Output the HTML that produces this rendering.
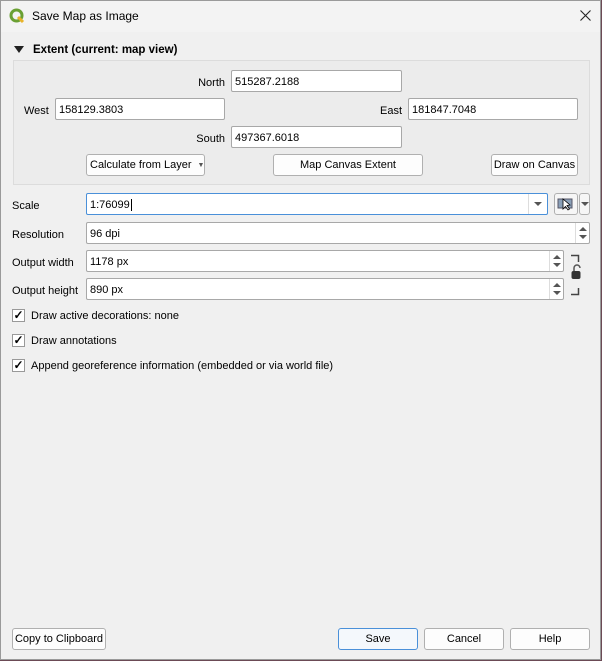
<!DOCTYPE html>
<html><head><meta charset="utf-8"><style>
*{box-sizing:border-box}
html,body{margin:0;width:602px;height:661px;overflow:hidden}
body{background:#6b4a55;font-family:"Liberation Sans",sans-serif;font-size:11px;color:#000;position:relative}
#win{position:absolute;left:0;top:0;width:601px;height:660px;background:#f0f0f0;box-shadow:inset 0 0 0 1px #9a9a9a}
.a{position:absolute}
.in{position:absolute;background:#fff;border:1px solid #a8a8a8;border-radius:2px;padding:4px 0 0 3px;height:22px;line-height:14px;white-space:nowrap}
.btn{position:absolute;background:#fdfdfd;border:1px solid #b0b0b0;border-radius:3px;height:22px;text-align:center;line-height:21px;white-space:nowrap}
.lbl{position:absolute;line-height:16px;white-space:nowrap}
.r{text-align:right}
.spin{position:absolute;right:0;top:0;bottom:0;width:14px;border-left:1px solid #ddd}
.spin:before{content:"";position:absolute;left:3px;top:4px;border:4px solid transparent;border-bottom:4px solid #555;border-top:0}
.spin:after{content:"";position:absolute;left:3px;bottom:4px;border:4px solid transparent;border-top:4px solid #555;border-bottom:0}
.cb{position:absolute;left:12px;width:13px;height:13px;background:#fff;border:1px solid #999;font-size:12px;line-height:11px;text-align:center;font-weight:bold}
</style></head><body><div id="win">
<div class="a" style="left:1px;top:1px;width:599px;height:31px;background:#f3f3f3"></div>
<svg class="a" style="left:9px;top:8px" width="16" height="16" viewBox="0 0 16 16"><circle cx="7.5" cy="7.5" r="5.5" fill="none" stroke="#6aa033" stroke-width="3"/><path d="M9 9 L14 14" stroke="#e8b32a" stroke-width="3"/></svg>
<div class="lbl" style="left:32px;top:8px;font-size:12px">Save Map as Image</div>
<svg class="a" style="left:580px;top:10px" width="11" height="11" viewBox="0 0 11 11"><path d="M0.5 0.5 L10.5 10.5 M10.5 0.5 L0.5 10.5" stroke="#222" stroke-width="1.1"/></svg>
<div class="a" style="left:14px;top:46px;border:5px solid transparent;border-top:7px solid #222;border-bottom:0"></div>
<div class="lbl" style="left:33px;top:42px;font-weight:bold;font-size:11.5px">Extent (current: map view)</div>
<div class="a" style="left:13px;top:60px;width:577px;height:125px;background:#ececec;border:1px solid #dcdcdc"></div>
<div class="lbl r" style="left:150px;width:75px;top:75px">North</div>
<div class="in" style="left:231px;top:70px;width:171px">515287.2188</div>
<div class="lbl" style="left:24px;top:103px">West</div>
<div class="in" style="left:55px;top:98px;width:170px">158129.3803</div>
<div class="lbl r" style="left:340px;width:62px;top:103px">East</div>
<div class="in" style="left:408px;top:98px;width:170px">181847.7048</div>
<div class="lbl r" style="left:150px;width:75px;top:131px">South</div>
<div class="in" style="left:231px;top:126px;width:171px">497367.6018</div>
<div class="btn" style="left:86px;top:154px;width:119px;text-align:left;padding-left:3px">Calculate from Layer <span style="font-size:7px;color:#555;margin-left:3px;vertical-align:1px">▼</span></div>
<div class="btn" style="left:273px;top:154px;width:150px">Map Canvas Extent</div>
<div class="btn" style="left:491px;top:154px;width:87px">Draw on Canvas</div>
<div class="lbl" style="left:12px;top:198px">Scale</div>
<div class="in" style="left:86px;top:193px;width:462px;border-color:#4a90d9">1:76099<span style="border-left:1px solid #000;margin-left:1px"></span><div class="a" style="right:0;top:0;bottom:0;width:19px;border-left:1px solid #ddd"><div class="a" style="left:5px;top:8px;border:4px solid transparent;border-top:4px solid #555;border-bottom:0"></div></div></div>
<div class="btn" style="left:554px;top:193px;width:24px;background:#f6f6f6"><svg width="18" height="14" viewBox="0 0 18 14" style="margin-top:3px"><rect x="1" y="2" width="14" height="9" fill="#8aa0b8" stroke="#556"/><path d="M6 2 L6 12 L8.5 9.5 L11 13 L12.5 12 L10 8.5 L13 8 Z" fill="#fff" stroke="#000" stroke-width=".8"/></svg></div>
<div class="btn" style="left:579px;top:193px;width:11px;background:#f6f6f6"><div class="a" style="left:1px;top:8px;border:4px solid transparent;border-top:4px solid #555;border-bottom:0"></div></div>
<div class="lbl" style="left:12px;top:227px">Resolution</div>
<div class="in" style="left:86px;top:222px;width:504px">96 dpi<div class="spin"></div></div>
<div class="lbl" style="left:12px;top:255px">Output width</div>
<div class="in" style="left:86px;top:250px;width:478px">1178 px<div class="spin"></div></div>
<div class="lbl" style="left:12px;top:283px">Output height</div>
<div class="in" style="left:86px;top:278px;width:478px">890 px<div class="spin"></div></div>
<svg class="a" style="left:569px;top:254px" width="14" height="42" viewBox="0 0 14 42"><path d="M2 1.5 H9.5 V8 M2 40.5 H9.5 V34" fill="none" stroke="#444" stroke-width="1.5"/><path d="M5 17 V14 a3 3 0 0 1 6 0" fill="none" stroke="#555" stroke-width="1.5"/><rect x="2.5" y="17" width="9" height="8" rx="2" fill="#333"/></svg>
<div class="cb" style="top:309px">✓</div><div class="lbl" style="left:31px;top:308px">Draw active decorations: none</div>
<div class="cb" style="top:334px">✓</div><div class="lbl" style="left:31px;top:333px">Draw annotations</div>
<div class="cb" style="top:359px">✓</div><div class="lbl" style="left:31px;top:358px">Append georeference information (embedded or via world file)</div>
<div class="btn" style="left:12px;top:628px;width:94px">Copy to Clipboard</div>
<div class="btn" style="left:338px;top:628px;width:80px;border-color:#4a90d9;background:#f4f8fc">Save</div>
<div class="btn" style="left:424px;top:628px;width:80px">Cancel</div>
<div class="btn" style="left:510px;top:628px;width:80px">Help</div>
</div></body></html>
